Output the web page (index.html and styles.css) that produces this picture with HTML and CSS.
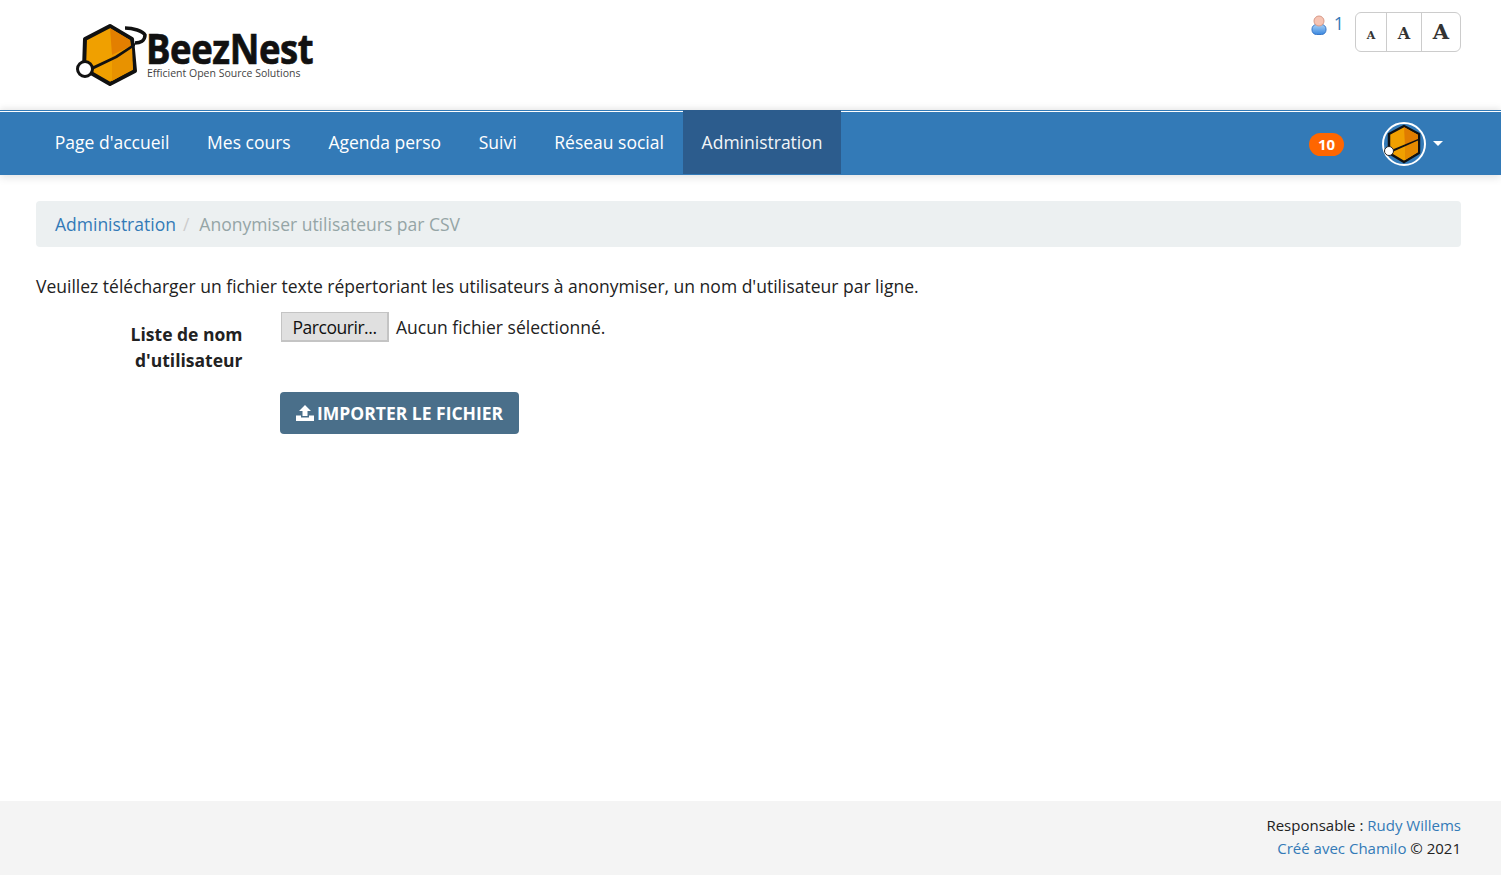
FILE: index.html
```html
<!DOCTYPE html>
<html lang="fr">
<head>
<meta charset="utf-8">
<title>Anonymiser utilisateurs par CSV</title>
<link rel="stylesheet" href="styles.css">
</head>
<body>
<div class="page">
<header class="top">
  <a class="logo" href="#">
    <svg class="logo-mark" viewBox="0 0 72 66" width="72" height="66">
      <path d="M35 3 L57 16 L60 48 L35 61 L9 46 L10 16 Z" fill="#f0a000" stroke="#111" stroke-width="4" stroke-linejoin="round"/>
      <path d="M35 5 L55 17 L56 23 L37 32 Z" fill="#e37f00"/>
      <path d="M37 33 L57 24 L58 46 L37 58 Z" fill="#e89200"/>
      <path d="M10 47 L40 33 L60 20 L60 23 L42 35 L13 49 Z" fill="#111"/>
      <path d="M50 5 C58 5 68 8 70 12 C70 18 65 20 60 20" fill="none" stroke="#111" stroke-width="3.5"/>
      <circle cx="10" cy="46" r="7.5" fill="#fff" stroke="#111" stroke-width="3"/>
    </svg>
    <span class="logo-text">
      <span class="logo-name">BeezNest</span>
      <span class="logo-sub">Efficient Open Source Solutions</span>
    </span>
  </a>
  <div class="top-tools">
    <a class="online" href="#">
      <svg viewBox="0 0 16 20" width="16" height="20">
        <defs>
          <linearGradient id="body" x1="0" y1="0" x2="0" y2="1">
            <stop offset="0" stop-color="#a8d0f5"/>
            <stop offset="1" stop-color="#3a88e0"/>
          </linearGradient>
        </defs>
        <rect x="1" y="9.5" width="14" height="10" rx="4.5" fill="url(#body)" stroke="#3a78c8"/>
        <circle cx="8" cy="6" r="5" fill="#f6c4b4" stroke="#d99a88"/>
      </svg>
      <span>1</span>
    </a>
    <div class="font-sizes">
      <button class="fs fs-s" type="button">A</button>
      <button class="fs fs-m" type="button">A</button>
      <button class="fs fs-l" type="button">A</button>
    </div>
  </div>
</header>
<nav class="navbar">
  <ul class="menu">
    <li><a href="#">Page d'accueil</a></li>
    <li><a href="#">Mes cours</a></li>
    <li><a href="#">Agenda perso</a></li>
    <li><a href="#">Suivi</a></li>
    <li><a href="#">Réseau social</a></li>
    <li><a class="active" href="#">Administration</a></li>
  </ul>
  <div class="nav-right">
    <span class="badge">10</span>
    <a class="user" href="#">
      <span class="avatar">
        <svg viewBox="0 0 44 44" width="44" height="44">
          <circle cx="22" cy="22" r="21" fill="#337ab7" stroke="#fff" stroke-width="2"/>
          <path d="M22 4 L37 12 L37 31 L22 40 L7 31 L7 12 Z" fill="#f0a000" stroke="#111" stroke-width="2.5" stroke-linejoin="round"/>
          <path d="M22 5 L36 13 L36 18 L23 24 Z" fill="#e07c00"/>
          <path d="M23 24 L36 19 L36 30 L23 38 Z" fill="#e58a00"/>
          <path d="M7 29 L36 17 L36 18.5 L8 31 Z" fill="#111"/>
          <circle cx="7" cy="29" r="4.5" fill="#fff" stroke="#222"/>
        </svg>
      </span>
      <span class="caret"></span>
    </a>
  </div>
</nav>
<main class="content">
  <ol class="breadcrumb">
    <li><a href="#">Administration</a></li>
    <li class="sep">/</li>
    <li class="current">Anonymiser utilisateurs par CSV</li>
  </ol>
  <p class="intro">Veuillez télécharger un fichier texte répertoriant les utilisateurs à anonymiser, un nom d'utilisateur par ligne.</p>
  <form class="form">
    <div class="form-row">
      <label class="form-label">Liste de nom d'utilisateur</label>
      <div class="file-field">
        <span class="file-btn">Parcourir...</span>
        <span class="file-name">Aucun fichier sélectionné.</span>
      </div>
    </div>
    <div class="form-actions">
      <button class="btn-import" type="button">
        <svg viewBox="0 0 18 16" width="18" height="16">
          <path d="M9 0 L15 6 L11.5 6 L11.5 11 L6.5 11 L6.5 6 L3 6 Z" fill="#fff"/>
          <path d="M0 10.5 H5 V12.5 H13 V10.5 H18 V16 H0 Z" fill="#fff"/>
        </svg>
        <span>IMPORTER LE FICHIER</span>
      </button>
    </div>
  </form>
</main>
<footer class="footer">
  <div>Responsable : <a href="#">Rudy Willems</a></div>
  <div><a href="#">Créé avec Chamilo</a> © 2021</div>
</footer>
</div>
</body>
</html>
```
FILE: styles.css
```css
* { box-sizing: border-box; }
html, body { margin: 0; height: 100%; }
body {
  font-family: "Open Sans", sans-serif;
  font-size: 17.5px;
  line-height: 26px;
  color: #222;
  background: #fff;
}
a { color: #337ab7; text-decoration: none; }
.page { display: flex; flex-direction: column; height: 875px; overflow: hidden; }

.top {
  height: 110px;
  flex: none;
  display: flex;
  justify-content: space-between;
  align-items: flex-start;
  padding: 0 40px 0 76px;
}
.logo { display: flex; align-items: flex-start; margin-top: 24px; color: #111; }
.logo-mark { flex: none; margin-left: -1px; margin-top: -1px; }
.logo-text { display: flex; flex-direction: column; margin-left: 0; }
.logo-name {
  font-family: "Open Sans", sans-serif;
  font-weight: 700;
  font-size: 41px;
  line-height: 38px;
  letter-spacing: -0.5px;
  color: #111;
  width: 168px;
  white-space: nowrap;
  transform: scaleX(.89);
  transform-origin: left center;
  margin-left: -1px;
  margin-top: 5px;
  -webkit-text-stroke: .7px #111;
}
.logo-sub {
  font-family: "Open Sans", sans-serif;
  font-size: 10.5px;
  line-height: 12px;
  color: #444;
  margin-left: 0;
  white-space: nowrap;
}
.top-tools { display: flex; align-items: flex-start; margin-top: 12px; }
.online { display: flex; align-items: flex-start; gap: 7px; margin-right: 12px; line-height: 23px; font-size: 18px; }
.online svg { margin-top: 3px; }
.online span { margin-right: -1px; }
.font-sizes { display: flex; border: 1px solid #ccc; border-radius: 6px; height: 40px; background: #fff; }
.fs {
  border: 0;
  border-left: 1px solid #ccc;
  background: none;
  padding: 0;
  font-family: "DejaVu Serif", "Liberation Serif", serif;
  font-weight: 700;
  color: #333;
  height: 38px;
  display: flex;
  align-items: center;
  justify-content: center;
}
.fs-s { width: 30px; border-left: 0; font-size: 11px; padding-top: 6px; }
.fs-m { width: 35px; font-size: 16px; padding-top: 2px; }
.fs-l { width: 39px; font-size: 21px; padding-bottom: 1px; }

.navbar {
  height: 65px;
  flex: none;
  background: #337ab7;
  border-top: 1px solid #337ab7;
  box-shadow: 0 -3px 6px rgba(0,0,0,.06), 0 3px 8px rgba(0,0,0,.1), inset 0 1px 0 #fff;
  display: flex;
  justify-content: space-between;
  padding: 0 40px 0 36px;
}
.menu { list-style: none; margin: 0; padding: 0; display: flex; }
.menu a {
  display: block;
  height: 63px;
  padding: 0 18.85px;
  line-height: 62px;
  color: #fff;
}
.menu a.active { background: #2c5c8d; margin-top: -1px; height: 64px; line-height: 64px; color: #f2f5f8; }
.nav-right { display: flex; align-items: center; }
.badge {
  background: #f60;
  color: #fff;
  font-size: 15px;
  font-weight: 700;
  line-height: 23px;
  height: 23px;
  width: 35px;
  text-align: center;
  border-radius: 12px;
  margin-right: 38px;
  margin-top: 3px;
}
.user { display: flex; align-items: center; width: 79px; }
.avatar { width: 44px; height: 44px; display: block; margin-top: 1px; }
.avatar svg { display: block; }
.caret {
  margin-left: 7px;
  border-top: 5px solid #fff;
  border-left: 5px solid transparent;
  border-right: 5px solid transparent;
}

.content { flex: 1; padding: 26px 40px 0 36px; }
.breadcrumb {
  list-style: none;
  margin: 0 0 26px;
  padding: 0 19px;
  height: 46px;
  line-height: 46px;
  background: #ecf0f1;
  border-radius: 4px;
  display: flex;
}
.sep { color: #ccc; margin: 0 10px 0 7px; }
.current { color: #95a5a6; }
.intro { margin: 0 0 13px; line-height: 26px; }
.form-row { display: flex; }
.form-label {
  width: 206.5px;
  text-align: right;
  font-weight: 700;
  margin-top: 9px;
  color: #222;
}
.file-field { margin-left: 38.5px; display: flex; align-items: center; height: 30px; }
.file-btn {
  background: #e0e0e0;
  border-style: solid;
  border-width: 1px 2px 2px 1px;
  border-color: #c4c4c4;
  height: 30px;
  width: 108px;
  line-height: 28px;
  text-align: center;
  color: #111;
  letter-spacing: -.45px;
}
.file-name { margin-left: 7px; }
.form-actions { margin: 19px 0 0 244px; }
.btn-import {
  height: 42px;
  width: 239px;
  border: 0;
  border-radius: 4px;
  background: #4a6f8a;
  color: #fff;
  font-family: "Open Sans", sans-serif;
  font-weight: 700;
  font-size: 17.5px;
  display: flex;
  align-items: center;
  padding: 0 0 0 16px;
  gap: 3px;
}
.btn-import svg { flex: none; }

.footer {
  height: 74px;
  flex: none;
  background: #f4f4f4;
  text-align: right;
  font-size: 15px;
  line-height: 23px;
  padding: 13px 40px 0 0;
  color: #222;
}
```
